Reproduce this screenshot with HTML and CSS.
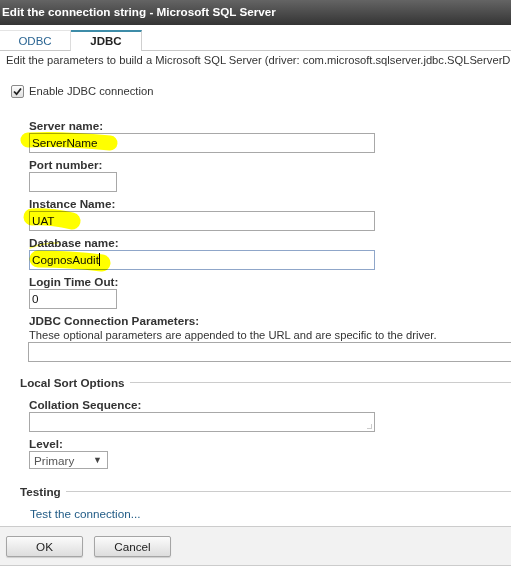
FILE: index.html
```html
<!DOCTYPE html>
<html>
<head>
<meta charset="utf-8">
<link rel="stylesheet" href="styles.css">
</head>
<body>
<div class="dialog">
  <div class="titlebar">Edit the connection string - Microsoft SQL Server</div>
  <div class="tabs">
    <div class="tab">ODBC</div>
    <div class="tab active">JDBC</div>
    <div class="tab-fill"></div>
  </div>
  <div class="content">
    <p class="desc">Edit the parameters to build a Microsoft SQL Server (driver: com.microsoft.sqlserver.jdbc.SQLServerDriver)</p>
    <div class="check">
      <span class="cb"><svg width="9" height="9" viewBox="0 0 9 9"><path d="M1 4.5 L3.6 7.2 L8 1.5" fill="none" stroke="#222" stroke-width="1.8"/></svg></span>
      <span>Enable JDBC connection</span>
    </div>
    <div class="fields">
      <div class="lbl">Server name:</div>
      <div class="input wide">ServerName</div>
      <div class="lbl">Port number:</div>
      <div class="input short"></div>
      <div class="lbl">Instance Name:</div>
      <div class="input wide">UAT</div>
      <div class="lbl">Database name:</div>
      <div class="input wide focus">CognosAudi<span class="caret">t</span></div>
      <div class="lbl">Login Time Out:</div>
      <div class="input short">0</div>
      <div class="lbl">JDBC Connection Parameters:</div>
      <div class="hint">These optional parameters are appended to the URL and are specific to the driver.</div>
      <div class="input full"></div>
    </div>
    <div class="section"><span>Local Sort Options</span><span class="rule"></span></div>
    <div class="fields">
      <div class="lbl">Collation Sequence:</div>
      <div class="input wide area"><span class="grip"></span></div>
      <div class="lbl">Level:</div>
      <div class="select"><span>Primary</span><span class="arrow">&#9660;</span></div>
    </div>
    <div class="section testing"><span>Testing</span><span class="rule"></span></div>
    <div class="link">Test the connection...</div>
  </div>
  <div class="footer">
    <div class="btn ok">OK</div>
    <div class="btn cancel">Cancel</div>
  </div>
  <svg class="marker" width="511" height="572" viewBox="0 0 511 572">
    <path d="M28 140 Q60 138 110 143" fill="none" stroke="#ffff00" stroke-width="15" stroke-linecap="round"/>
    <path d="M32 217 Q50 216 72 221" fill="none" stroke="#ffff00" stroke-width="17" stroke-linecap="round"/>
    <path d="M38 259 Q70 259 102 263" fill="none" stroke="#ffff00" stroke-width="17" stroke-linecap="round"/>
    <path d="M30 248 Q42 243 58 243" fill="none" stroke="#ffff66" stroke-width="1.5" stroke-linecap="round"/>
  </svg>
</div>
</body>
</html>
```

FILE: styles.css
```css
html, body {
  margin: 0;
  padding: 0;
  background: #ffffff;
}
body {
  width: 511px;
  height: 572px;
  overflow: hidden;
  font-family: "Liberation Sans", Arial, sans-serif;
  font-size: 11.2px;
  color: #333333;
}
.dialog {
  position: relative;
  width: 511px;
  height: 572px;
  overflow: hidden;
}
.titlebar {
  height: 25px;
  line-height: 24px;
  padding-left: 2px;
  color: #ffffff;
  font-weight: bold;
  font-size: 11.7px;
  background: linear-gradient(#646464, #343434);
  white-space: nowrap;
}
.tabs {
  display: flex;
  margin-top: 5px;
  height: 21px;
}
.tab {
  width: 71px;
  box-sizing: border-box;
  text-align: center;
  line-height: 20px;
  font-size: 11.5px;
  color: #2b6592;
  border-top: 1px solid #e4e4e4;
  border-right: 1px solid #dcdcdc;
  border-bottom: 1px solid #c8c8c8;
}
.tab.active {
  color: #222222;
  font-weight: bold;
  border-top: 2px solid #3d8ca8;
  border-right: 1px solid #cfcfcf;
  border-bottom: none;
  line-height: 19px;
}
.tab-fill {
  flex: 1;
  border-bottom: 1px solid #c8c8c8;
}
.content {
  padding-left: 6px;
}
.desc {
  margin: 0;
  height: 17px;
  line-height: 18px;
  white-space: nowrap;
}
.check {
  display: flex;
  align-items: center;
  margin-top: 15px;
  margin-left: 5px;
  height: 16px;
}
.cb {
  width: 11px;
  height: 11px;
  border: 1px solid #8a8a8a;
  border-radius: 2px;
  background: linear-gradient(#fdfdfd, #e0e0e0);
  display: flex;
  align-items: center;
  justify-content: center;
  margin-right: 5px;
}
.fields {
  display: flex;
  flex-direction: column;
  align-items: flex-start;
  padding-left: 23px;
}
.check + .fields {
  margin-top: 15px;
}
.lbl {
  font-weight: bold;
  font-size: 11.7px;
  height: 19px;
  padding-top: 4px;
  box-sizing: border-box;
  line-height: 15px;
}
.input {
  height: 20px;
  box-sizing: border-box;
  border: 1px solid #a8a8a8;
  line-height: 18px;
  padding-left: 2px;
  position: relative;
  color: #111111;
  font-size: 11.7px;
}
.input.wide { width: 346px; }
.input.short { width: 88px; }
.input.full { width: 490px; margin-left: -1px; }
.input.focus { border-color: #8fa6c9; }
.caret {
  border-right: 1px solid #000;
}
.hint {
  height: 14px;
  line-height: 14px;
  white-space: nowrap;
}
.section {
  display: flex;
  align-items: center;
  font-weight: bold;
  font-size: 11.7px;
  margin-left: 14px;
  margin-top: 13px;
  height: 15px;
}
.section .rule {
  flex: 1;
  height: 1px;
  background: #cccccc;
  margin-left: 5px;
  margin-right: -10px;
}
.area .grip {
  position: absolute;
  right: 2px;
  bottom: 2px;
  width: 4px;
  height: 4px;
  border-right: 1px solid #cccccc;
  border-bottom: 1px solid #cccccc;
}
.section + .fields .lbl:first-child {
  margin-top: 3px;
}
.select {
  width: 79px;
  height: 18px;
  box-sizing: border-box;
  border: 1px solid #a8a8a8;
  display: flex;
  align-items: center;
  justify-content: space-between;
  padding: 0 5px 0 4px;
  color: #555555;
  font-size: 11.7px;
}
.select .arrow {
  font-size: 9px;
  color: #444;
}
.testing {
  margin-top: 15px;
}
.link {
  color: #1f5a85;
  margin-left: 24px;
  margin-top: 7px;
  height: 16px;
  line-height: 16px;
  font-size: 11.7px;
}
.footer {
  position: absolute;
  left: 0;
  right: 0;
  top: 526px;
  height: 40px;
  box-sizing: border-box;
  background: #f2f2f2;
  border-top: 1px solid #cccccc;
  border-bottom: 1px solid #cccccc;
  display: flex;
  align-items: center;
  gap: 11px;
  padding-left: 6px;
}
.btn {
  width: 77px;
  height: 21px;
  box-sizing: border-box;
  border: 1px solid #a5a5a5;
  border-radius: 2px;
  background: linear-gradient(#fbfbfb, #dddddd);
  box-shadow: 0 1px 1px rgba(0,0,0,0.15);
  text-align: center;
  line-height: 19px;
  color: #222222;
  font-size: 11.7px;
}
.marker {
  position: absolute;
  left: 0;
  top: 0;
  pointer-events: none;
  mix-blend-mode: multiply;
}
```
